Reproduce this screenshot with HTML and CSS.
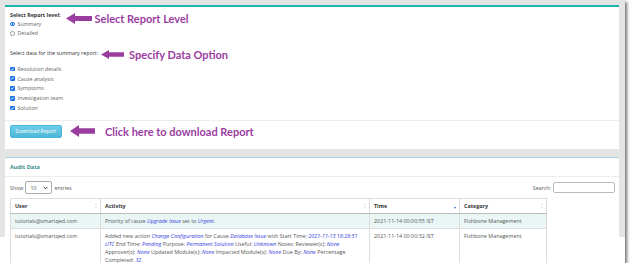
FILE: index.html
```html
<!DOCTYPE html>
<html lang="en">

<head>
    <meta charset="UTF-8">
    <title>Report</title>
    <link rel="stylesheet" href="styles.css">
</head>

<body>
    <div class="shot">
        <div class="panel report">
            <div class="label-row">
                <span class="lbl">Select Report level:</span>
                <span class="note note-level">
                    <svg class="arrow" width="26" height="11" viewBox="0 0 26 11"><polygon points="0,5.5 9,0 9,3 26,3 26,8 9,8 9,11"/></svg>
                    <span>Select Report Level</span>
                </span>
            </div>
            <div class="opt"><span class="radio on"></span>Summary</div>
            <div class="opt"><span class="radio"></span>Detailed</div>

            <div class="label-row sub">
                <span class="lbl">Select data for the summary report:</span>
                <span class="note note-data">
                    <svg class="arrow" width="23" height="9" viewBox="0 0 23 9"><polygon points="0,4.5 8,0 8,2.3 23,2.3 23,6.7 8,6.7 8,9"/></svg>
                    <span>Specify Data Option</span>
                </span>
            </div>
            <div class="checks">
                <div class="opt"><span class="check"><svg viewBox="0 0 6 6"><path d="M1.2 3.1 L2.5 4.3 L4.8 1.6"/></svg></span>Resolution details</div>
                <div class="opt"><span class="check"><svg viewBox="0 0 6 6"><path d="M1.2 3.1 L2.5 4.3 L4.8 1.6"/></svg></span>Cause analysis</div>
                <div class="opt"><span class="check"><svg viewBox="0 0 6 6"><path d="M1.2 3.1 L2.5 4.3 L4.8 1.6"/></svg></span>Symptoms</div>
                <div class="opt"><span class="check"><svg viewBox="0 0 6 6"><path d="M1.2 3.1 L2.5 4.3 L4.8 1.6"/></svg></span>Investigation team</div>
                <div class="opt"><span class="check"><svg viewBox="0 0 6 6"><path d="M1.2 3.1 L2.5 4.3 L4.8 1.6"/></svg></span>Solution</div>
            </div>

            <div class="foot">
                <button class="btn" type="button">Download Report</button>
                <span class="note note-btn">
                    <svg class="arrow" width="25" height="12" viewBox="0 0 25 12"><polygon points="0,6 9,0 9,3.2 25,3.2 25,8.8 9,8.8 9,12"/></svg>
                    <span>Click here to download Report</span>
                </span>
            </div>
        </div>

        <div class="panel audit">
            <div class="audit-head">Audit Data</div>
            <div class="audit-body">
                <div class="tools">
                    <span>Show</span>
                    <span class="select">10<svg width="5" height="4" viewBox="0 0 5 4"><path d="M0.7 1 L2.5 2.8 L4.3 1"/></svg></span>
                    <span>entries</span>
                    <span class="search">Search:<span class="search-box"></span></span>
                </div>
                <table class="grid">
                    <colgroup>
                        <col style="width: 90px">
                        <col style="width: 269px">
                        <col style="width: 90px">
                        <col style="width: 87px">
                    </colgroup>
                    <thead>
                        <tr>
                            <th>User<span class="sort"></span></th>
                            <th>Activity<span class="sort"></span></th>
                            <th>Time<span class="sort down"></span></th>
                            <th>Category<span class="sort"></span></th>
                        </tr>
                    </thead>
                    <tbody>
                        <tr class="odd">
                            <td>tutorials@smartqed.com</td>
                            <td>Priority of cause <i>Upgrade Issue</i> set to <i>Urgent</i>.</td>
                            <td>2021-11-14 00:00:55 IST</td>
                            <td>Fishbone Management</td>
                        </tr>
                        <tr>
                            <td>tutorials@smartqed.com</td>
                            <td>Added new action <i>Change Configuration</i> for Cause <i>Database Issue</i> with Start Time: <i>2021-11-13 18:28:51 UTC</i> End Time: <i>Pending</i> Purpose: <i>Permanent Solution</i> Useful: <i>Unknown</i> Notes: Reviewer(s): <i>None</i> Approver(s): <i>None</i> Updated Module(s): <i>None</i> Impacted Module(s): <i>None</i> Due By: <i>None</i> Percentage Completed: <i>32</i></td>
                            <td>2021-11-14 00:00:32 IST</td>
                            <td>Fishbone Management</td>
                        </tr>
                    </tbody>
                </table>
            </div>
        </div>
    </div>
</body>

</html>
```

FILE: styles.css
```css
* {
    padding: 0;
    margin: 0;
    box-sizing: border-box;
}

body {
    background: #fff;
    font-family: "Open Sans", sans-serif;
    color: #555;
}

.shot {
    width: 625px;
    height: 263px;
    overflow: hidden;
    padding: 5px 6px 0 5px;
    background: linear-gradient(#e4e4e4 237px, #fff 237px);
    box-shadow: 2px 2px 3px rgba(0, 0, 0, 0.55);
}

.panel {
    background: #fff;
}

.report {
    height: 144px;
    border-top: 2px solid #1db5ab;
    padding-top: 4px;
}

.label-row {
    display: flex;
    align-items: center;
    height: 8px;
    padding-left: 5px;
    font-size: 5.3px;
    color: #333;
}

.label-row .lbl {
    font-weight: 700;
}

.label-row.sub {
    margin-top: 11px;
}

.label-row.sub .lbl {
    font-weight: 400;
}

.opt {
    display: flex;
    align-items: center;
    gap: 3px;
    height: 9.5px;
    padding-left: 5px;
    font-size: 5.3px;
    color: #666;
}

.checks {
    margin-top: 7px;
}

.checks .opt {
    height: 9.8px;
}

.radio {
    width: 4.5px;
    height: 4.5px;
    border-radius: 50%;
    border: 0.6px solid #999;
    background: #fff;
}

.radio.on {
    border-color: #1a73e8;
    background: radial-gradient(#1a73e8 45%, #fff 55%);
}

.check {
    width: 4.5px;
    height: 4.5px;
    border-radius: 1px;
    background: #1a73e8;
    display: flex;
}

.check svg {
    width: 100%;
    height: 100%;
    fill: none;
    stroke: #fff;
    stroke-width: 1.1;
}

.note {
    display: flex;
    align-items: center;
    color: #9a3d9f;
    font-family: Lato, sans-serif;
    font-weight: 700;
    font-size: 11px;
    white-space: nowrap;
}

.arrow {
    fill: #9a3d9f;
    flex: none;
}

.note-level {
    margin-left: 5px;
    margin-top: 6px;
    gap: 3px;
}

.note-data {
    margin-left: 3px;
    margin-top: 2px;
    gap: 5px;
}

.note-btn {
    margin-left: 8px;
    gap: 10px;
}

.foot {
    display: flex;
    align-items: center;
    margin-top: 7px;
    padding: 4px 5px 0;
    border-top: 1px solid #eee;
}

.btn {
    width: 52px;
    height: 13px;
    border: 1px solid #46b8da;
    border-radius: 2px;
    background: linear-gradient(#6fcde8, #4db7d7);
    color: #fff;
    font-family: "Open Sans", sans-serif;
    font-size: 5px;
}

.audit {
    height: 120px;
    margin-top: 8px;
    border-top: 1px solid #a9d2e6;
}

.audit-head {
    display: flex;
    align-items: center;
    height: 19px;
    padding-left: 5px;
    border-bottom: 1px solid #eee;
    font-size: 5.6px;
    font-weight: 700;
    color: #3c8f8a;
}

.audit-body {
    padding: 4px 4px 0 5px;
}

.tools {
    display: flex;
    align-items: center;
    height: 13px;
    font-size: 5.3px;
    color: #555;
}

.select {
    display: flex;
    align-items: center;
    justify-content: space-between;
    width: 27px;
    height: 13px;
    margin: 0 2px;
    padding: 0 3px 0 4px;
    border: 1px solid #aaa;
    border-radius: 2px;
}

.select svg {
    fill: none;
    stroke: #333;
    stroke-width: 1;
}

.search {
    display: flex;
    align-items: center;
    margin-left: auto;
    gap: 2px;
}

.search-box {
    width: 62px;
    height: 11px;
    border: 1px solid #bbb;
    border-radius: 2px;
}

.grid {
    width: 536px;
    margin-top: 4px;
    table-layout: fixed;
    border-collapse: collapse;
    font-size: 5.4px;
    line-height: 8px;
    color: #555;
}

.grid th,
.grid td {
    padding: 3px 4px;
    border: 1px solid #ddd;
    text-align: left;
    vertical-align: top;
}

.grid th {
    position: relative;
    font-weight: 700;
    color: #333;
    border-bottom: 1px solid #bbb;
}

.grid tr.odd td {
    background: #eaf6f6;
}

.grid i {
    color: #3340dd;
}

.sort {
    position: absolute;
    right: 4px;
    top: 4px;
    width: 0;
    height: 6px;
}

.sort::before,
.sort::after {
    content: "";
    position: absolute;
    left: -1.5px;
    border-left: 1.5px solid transparent;
    border-right: 1.5px solid transparent;
}

.sort::before {
    top: 0;
    border-bottom: 2.2px solid #ddd;
}

.sort::after {
    bottom: 0;
    border-top: 2.2px solid #ddd;
}

.sort.down::before {
    display: none;
}

.sort.down::after {
    border-top-color: #3a6fd8;
}
```
